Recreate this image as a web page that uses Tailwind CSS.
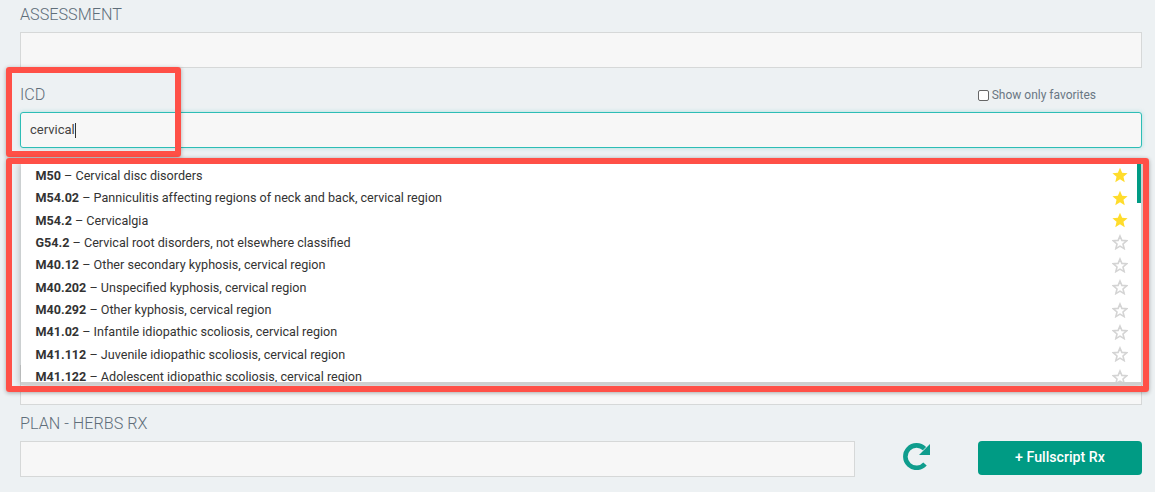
<!DOCTYPE html>
<html lang="en">
<head>
    <meta charset="UTF-8">
    <title>ICD search</title>
    <script src="https://cdn.jsdelivr.net/npm/@tailwindcss/browser@4"></script>
</head>
<body class="bg-[#edf1f3] font-['Roboto',sans-serif] h-[492px] overflow-hidden relative">
    <main class="pl-5 pr-[13px]">
        <!-- Assessment -->
        <h2 class="h-8 pt-[5px] text-[16.2px] leading-[19px] font-light text-[#5f6e7a]">ASSESSMENT</h2>
        <div class="h-9 bg-[#f7f7f7] border border-[#d6d8d8]"></div>

        <!-- ICD -->
        <div class="flex justify-between items-end h-11 pb-2">
            <h2 class="text-[16.2px] leading-[19px] font-light text-[#5f6e7a]">ICD</h2>
            <label class="flex items-center gap-[3px] mr-[46px] mb-[1px] text-xs text-[#6a7783]">
                <span class="w-[11px] h-[11px] rounded-[2px] border border-[#666] bg-white"></span>
                Show only favorites
            </label>
        </div>
        <div class="relative">
            <div class="h-9 bg-[#f7f7f7] border border-[#2dbdb6] rounded-[3px] shadow-[0_0_4px_rgba(45,189,182,0.35)] flex items-center pl-[9px] text-[13px] text-[#444]">
                cervical<span class="w-px h-[15px] bg-[#333]"></span>
            </div>
        </div>
        <div class="h-[257px] flex items-end">
            <div class="w-full h-10 bg-[#f7f7f7] border border-[#d6d8d8]"></div>
        </div>

        <!-- Herbs -->
        <h2 class="h-9 pt-[9px] text-[16.2px] leading-[19px] font-light text-[#5f6e7a]">PLAN - HERBS RX</h2>
        <div class="flex items-start">
            <div class="w-[835px] h-9 bg-[#f7f7f7] border border-[#d6d8d8]"></div>
            <svg class="ml-[47px] mt-[1px] w-[28px] h-[28px]" viewBox="0 0 28 28" fill="none">
                <path d="M23 22A11.2 11.2 0 1 1 22.500 6.700" stroke="#0f9d8d" stroke-width="4.600"/>
                <path d="M28 2V13H17Z" fill="#0f9d8d"/>
            </svg>
            <button class="ml-[48px] w-[164px] h-[34px] bg-[#009b84] rounded-[4px] text-white text-[14.2px] font-medium">+ Fullscript Rx</button>
        </div>
    </main>

    <!-- Dropdown -->
    <div class="absolute left-[21px] top-[163px] w-[1122px] h-[222px] bg-white overflow-hidden border-r-2 border-b-[3px] border-[#cfcfcf] shadow-[0_0_8px_rgba(0,0,0,0.3)]">
        <ul class="pt-[2px] pl-[14.500px] pr-[13px] text-[12.600px] text-[#333]">
            <li class="h-[22.400px] flex justify-between items-center"><span><b>M50</b> – Cervical disc disorders</span><svg class="w-4 h-4 -mt-[2px]" viewBox="0 0 24 24"><path d="M12 1l3.200 7.600 8.200.7-6.200 5.400 1.900 8L12 18.400 4.900 22.700l1.900-8L.6 9.300l8.200-.7z" fill="#ffdc2b"/></svg></li>
            <li class="h-[22.400px] flex justify-between items-center"><span><b>M54.02</b> – Panniculitis affecting regions of neck and back, cervical region</span><svg class="w-4 h-4 -mt-[2px]" viewBox="0 0 24 24"><path d="M12 1l3.200 7.600 8.200.7-6.200 5.400 1.900 8L12 18.400 4.900 22.700l1.900-8L.6 9.300l8.200-.7z" fill="#ffdc2b"/></svg></li>
            <li class="h-[22.400px] flex justify-between items-center"><span><b>M54.2</b> – Cervicalgia</span><svg class="w-4 h-4 -mt-[2px]" viewBox="0 0 24 24"><path d="M12 1l3.200 7.600 8.200.7-6.200 5.400 1.900 8L12 18.400 4.900 22.700l1.900-8L.6 9.300l8.200-.7z" fill="#ffdc2b"/></svg></li>
            <li class="h-[22.400px] flex justify-between items-center"><span><b>G54.2</b> – Cervical root disorders, not elsewhere classified</span><svg class="w-4 h-4 -mt-[2px]" viewBox="0 0 24 24"><path d="M12 3l2.800 6.600 7.100.6-5.400 4.700 1.700 7L12 18.200l-6.200 3.700 1.700-7-5.400-4.700 7.100-.6z" fill="none" stroke="#d4d4d4" stroke-width="2.400"/></svg></li>
            <li class="h-[22.400px] flex justify-between items-center"><span><b>M40.12</b> – Other secondary kyphosis, cervical region</span><svg class="w-4 h-4 -mt-[2px]" viewBox="0 0 24 24"><path d="M12 3l2.800 6.600 7.100.6-5.400 4.700 1.700 7L12 18.200l-6.200 3.700 1.700-7-5.400-4.700 7.100-.6z" fill="none" stroke="#d4d4d4" stroke-width="2.400"/></svg></li>
            <li class="h-[22.400px] flex justify-between items-center"><span><b>M40.202</b> – Unspecified kyphosis, cervical region</span><svg class="w-4 h-4 -mt-[2px]" viewBox="0 0 24 24"><path d="M12 3l2.800 6.600 7.100.6-5.400 4.700 1.700 7L12 18.200l-6.200 3.700 1.700-7-5.400-4.700 7.100-.6z" fill="none" stroke="#d4d4d4" stroke-width="2.400"/></svg></li>
            <li class="h-[22.400px] flex justify-between items-center"><span><b>M40.292</b> – Other kyphosis, cervical region</span><svg class="w-4 h-4 -mt-[2px]" viewBox="0 0 24 24"><path d="M12 3l2.800 6.600 7.100.6-5.400 4.700 1.700 7L12 18.200l-6.200 3.700 1.700-7-5.400-4.700 7.100-.6z" fill="none" stroke="#d4d4d4" stroke-width="2.400"/></svg></li>
            <li class="h-[22.400px] flex justify-between items-center"><span><b>M41.02</b> – Infantile idiopathic scoliosis, cervical region</span><svg class="w-4 h-4 -mt-[2px]" viewBox="0 0 24 24"><path d="M12 3l2.800 6.600 7.100.6-5.400 4.700 1.700 7L12 18.200l-6.200 3.700 1.700-7-5.400-4.700 7.100-.6z" fill="none" stroke="#d4d4d4" stroke-width="2.400"/></svg></li>
            <li class="h-[22.400px] flex justify-between items-center"><span><b>M41.112</b> – Juvenile idiopathic scoliosis, cervical region</span><svg class="w-4 h-4 -mt-[2px]" viewBox="0 0 24 24"><path d="M12 3l2.800 6.600 7.100.6-5.400 4.700 1.700 7L12 18.200l-6.200 3.700 1.700-7-5.400-4.700 7.100-.6z" fill="none" stroke="#d4d4d4" stroke-width="2.400"/></svg></li>
            <li class="h-[22.400px] flex justify-between items-center"><span><b>M41.122</b> – Adolescent idiopathic scoliosis, cervical region</span><svg class="w-4 h-4 -mt-[2px]" viewBox="0 0 24 24"><path d="M12 3l2.800 6.600 7.100.6-5.400 4.700 1.700 7L12 18.200l-6.200 3.700 1.700-7-5.400-4.700 7.100-.6z" fill="none" stroke="#d4d4d4" stroke-width="2.400"/></svg></li>
        </ul>
        <div class="absolute right-0 top-0 w-1 h-10 bg-[#009b84]"></div>
    </div>

    <!-- Red annotation boxes -->
    <div class="absolute left-[6px] top-[67px] w-[175px] h-[90px] border-[6px] border-[#ff5047] rounded-[3px] shadow-[0_1px_4px_rgba(0,0,0,0.3)]"></div>
    <div class="absolute left-[6px] top-[158px] w-[1143px] h-[234px] border-[6px] border-[#ff5047] rounded-[3px] shadow-[0_1px_4px_rgba(0,0,0,0.3)]"></div>
</body>
</html>
